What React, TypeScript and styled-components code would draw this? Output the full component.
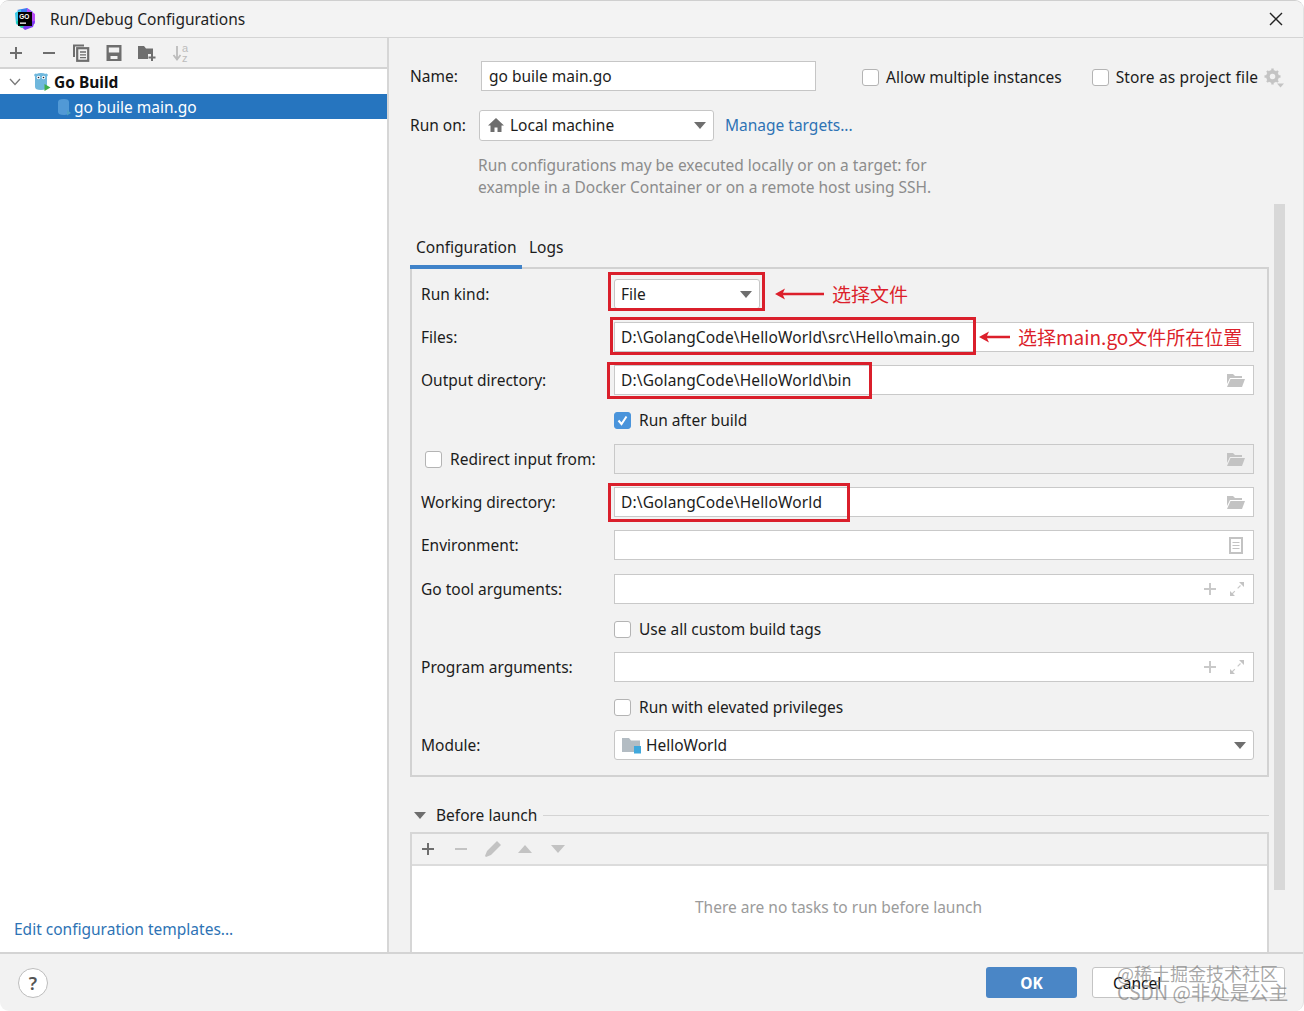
import styled, { createGlobalStyle } from "styled-components";

const GlobalStyle = createGlobalStyle`
  html, body { margin: 0; padding: 0; background: #fff; }
  body { font-family: "Noto Sans", "Noto Sans CJK SC", sans-serif; font-size: 15.5px; color: #1c1c1c; }
`;

const Window = styled.div`
  position: relative;
  width: 1304px;
  height: 1011px;
  box-sizing: border-box;
  border-top: 1px solid #cfcfcf;
  border-right: 1px solid #e2e2e2;
  border-radius: 9px;
  background: #f2f2f2;
  display: flex;
  flex-direction: column;
  overflow: hidden;
`;

const TitleBar = styled.div`
  height: 36px;
  flex: none;
  display: flex;
  align-items: center;
  padding: 0 20px 0 13px;
  background: #f3f3f3;
  border-bottom: 1px solid #d4d4d4;
`;

const TitleText = styled.div`
  margin-left: 13px;
  flex: 1;
  color: #1f1f1f;
`;

const Main = styled.div`
  flex: 1;
  min-height: 0;
  display: flex;
`;

const LeftPane = styled.div`
  width: 387px;
  flex: none;
  display: flex;
  flex-direction: column;
  background: #fff;
  border-right: 2px solid #d6d6d6;
`;

const Toolbar = styled.div`
  height: 29px;
  flex: none;
  background: #f2f2f2;
  border-bottom: 2px solid #d4d4d4;
  display: flex;
  align-items: center;
  padding-left: 7px;
  gap: 14.5px;
`;

const TreeRow = styled.div<{ $selected?: boolean; $indent: number }>`
  height: 25px;
  display: flex;
  align-items: center;
  padding-left: ${(p) => p.$indent}px;
  background: ${(p) => (p.$selected ? "#2675bf" : "transparent")};
  color: ${(p) => (p.$selected ? "#fff" : "#111")};
`;

const TreeChevron = styled.span`
  display: flex;
  width: 24px;
`;

const TreeLabel = styled.span<{ $bold?: boolean }>`
  font-weight: ${(p) => (p.$bold ? 700 : 400)};
  margin-left: 3px;
`;

const LeftSpacer = styled.div`
  flex: 1;
`;

const LinkText = styled.a`
  color: #2e73b5;
  text-decoration: none;
`;

const TemplatesLink = styled(LinkText)`
  padding: 0 0 12px 14px;
`;

const ManageLink = styled(LinkText)`
  margin-left: 11px;
`;

const RightPane = styled.div`
  position: relative;
  flex: 1;
  min-width: 0;
  overflow: hidden;
  padding: 23px 0 0 21px;
`;

const TopRow = styled.div<{ $gap?: number }>`
  display: flex;
  align-items: center;
  height: 30px;
  margin-top: ${(p) => p.$gap ?? 0}px;
`;

const TopLabel = styled.div<{ $width: number }>`
  width: ${(p) => p.$width}px;
  flex: none;
`;

const NameInput = styled.div`
  width: 335px;
  height: 30px;
  box-sizing: border-box;
  border: 1px solid #c6c6c6;
  background: #fff;
  padding-left: 7px;
  display: flex;
  align-items: center;
`;

const CheckLabel = styled.label<{ $left?: number; $spacing?: number }>`
  display: flex;
  align-items: center;
  gap: 7px;
  margin-left: ${(p) => p.$left ?? 0}px;
  letter-spacing: ${(p) => p.$spacing ?? 0}px;
`;

const TopCheck = styled(CheckLabel)`
  position: relative;
  top: 1px;
`;

const FormCheck = styled(CheckLabel)`
  gap: 8px;
`;

const CheckBox = styled.span<{ $checked?: boolean }>`
  width: 17px;
  height: 17px;
  box-sizing: border-box;
  border-radius: 3px;
  background: ${(p) => (p.$checked ? "#4a94db" : "#fff")};
  border: 1px solid ${(p) => (p.$checked ? "#4a94db" : "#b4b4b4")};
  display: flex;
  align-items: center;
  justify-content: center;
`;

const GearSlot = styled.span`
  display: flex;
  margin-left: 6px;
  margin-top: 3px;
`;

const Combo = styled.div<{ $width?: number; $height?: number; $pad?: number; $gap?: number }>`
  width: ${(p) => (p.$width ? `${p.$width}px` : "100%")};
  height: ${(p) => p.$height ?? 30}px;
  box-sizing: border-box;
  background: #fff;
  border: 1px solid #c6c6c6;
  border-radius: 3px;
  display: flex;
  align-items: center;
  padding: 0 7px 0 ${(p) => p.$pad ?? 8}px;
  gap: ${(p) => p.$gap ?? 6}px;
`;

const ComboText = styled.span`
  flex: 1;
`;

const HelpText = styled.div`
  margin: 14px 0 0 68px;
  color: #8c8c8c;
  line-height: 22px;
`;

const Tabs = styled.div`
  margin-top: 36px;
  display: flex;
  height: 35px;
  width: 858px;
`;

const Tab = styled.div<{ $active?: boolean }>`
  padding: 0 ${(p) => (p.$active ? "6px" : "7px")};
  height: 35px;
  line-height: 27px;
  box-sizing: border-box;
  width: ${(p) => (p.$active ? "112px" : "auto")};
  color: #1c1c1c;
  position: relative;
  z-index: 1;
  border-bottom: 4px solid ${(p) => (p.$active ? "#4083c9" : "transparent")};
`;

const ConfigPanel = styled.div`
  width: 859px;
  box-sizing: border-box;
  margin-top: -2px;
  border: 2px solid #d2d2d2;
  padding: 10px 13px 15px 9px;
`;

const FormRow = styled.div<{ $gap?: number; $height?: number }>`
  position: relative;
  display: grid;
  grid-template-columns: 193px 1fr;
  align-items: center;
  height: ${(p) => p.$height ?? 30}px;
  margin-top: ${(p) => p.$gap ?? 0}px;
`;

const RowLabel = styled.div`
  color: #1c1c1c;
`;

const RedirectLabel = styled(FormCheck)`
  margin-left: 4px;
  white-space: nowrap;
`;

const Field = styled.div<{ $disabled?: boolean }>`
  height: 30px;
  box-sizing: border-box;
  background: ${(p) => (p.$disabled ? "#f0f0f0" : "#fff")};
  border: 1px solid #c9c9c9;
  display: flex;
  align-items: center;
  padding: 0 8px 0 6px;
  gap: 10px;
`;

const FieldText = styled.span`
  flex: 1;
  white-space: nowrap;
  letter-spacing: 0.13px;
`;

const RedBox = styled.div<{ $left: number; $top: number; $width: number; $height: number }>`
  position: absolute;
  left: ${(p) => p.$left}px;
  top: ${(p) => p.$top}px;
  width: ${(p) => p.$width}px;
  height: ${(p) => p.$height}px;
  box-sizing: border-box;
  border: 3px solid #da1f2b;
  pointer-events: none;
`;

const Note = styled.div<{ $left: number; $top: number }>`
  position: absolute;
  left: ${(p) => p.$left}px;
  top: ${(p) => p.$top}px;
  display: flex;
  align-items: center;
  gap: 8px;
  color: #dc1f2b;
  font-family: "Noto Sans CJK SC", sans-serif;
  font-size: 19px;
  line-height: 26px;
  white-space: nowrap;
`;

const BeforeHeader = styled.div`
  margin-top: 27px;
  width: 859px;
  height: 22px;
  display: flex;
  align-items: center;
`;

const BeforeArrow = styled.span`
  display: flex;
  margin-left: 4px;
`;

const BeforeTitle = styled.span`
  margin: 0 6px 0 10px;
`;

const HeaderLine = styled.div`
  flex: 1;
  height: 1px;
  background: #d4d4d4;
`;

const TaskBox = styled.div`
  margin-top: 6px;
  width: 859px;
  height: 140px;
  box-sizing: border-box;
  border: 2px solid #d6d6d6;
  border-bottom: 0;
`;

const TaskToolbar = styled.div`
  height: 30px;
  display: flex;
  align-items: center;
  gap: 14.5px;
  padding-left: 7px;
  border-bottom: 2px solid #dcdcdc;
`;

const TaskBody = styled.div`
  background: #fff;
  height: 110px;
  display: flex;
  justify-content: center;
  padding-top: 30px;
  box-sizing: border-box;
  color: #9b9b9b;
  padding-right: 2px;
`;

const ScrollThumb = styled.div`
  position: absolute;
  left: 885px;
  top: 166px;
  width: 11px;
  height: 686px;
  background: #d8d8d8;
`;

const Footer = styled.div`
  position: relative;
  flex: none;
  height: 59px;
  box-sizing: border-box;
  border-top: 2px solid #d4d4d4;
  display: flex;
  align-items: center;
  padding: 0 18px 0 18px;
`;

const HelpButton = styled.div`
  width: 30px;
  height: 30px;
  box-sizing: border-box;
  border-radius: 50%;
  background: #fff;
  border: 1px solid #bdbdbd;
  color: #555;
  font-size: 18px;
  font-weight: 600;
  display: flex;
  align-items: center;
  justify-content: center;
`;

const OkButton = styled.div`
  margin-left: auto;
  width: 91px;
  height: 31px;
  box-sizing: border-box;
  border-radius: 3px;
  background: #4a86c6;
  color: #fff;
  font-weight: 700;
  display: flex;
  align-items: center;
  justify-content: center;
`;

const CancelButton = styled.div`
  margin-left: 15px;
  width: 193px;
  height: 31px;
  box-sizing: border-box;
  border-radius: 3px;
  background: #fff;
  border: 1px solid #c4c4c4;
  color: #111;
  padding-left: 20px;
  display: flex;
  align-items: center;
`;

const Watermark = styled.div`
  position: absolute;
  left: 1117px;
  top: 11px;
  color: rgba(110, 110, 110, 0.6);
  font-family: "Noto Sans CJK SC", sans-serif;
  pointer-events: none;
`;

const WatermarkTop = styled.div`
  font-size: 18px;
  line-height: 17px;
  white-space: nowrap;
`;

const WatermarkBottom = styled.div`
  font-size: 19.5px;
  line-height: 19px;
  white-space: nowrap;
`;

const GoLandLogo = () => (
  <svg width="24" height="24" viewBox="0 0 24 24">
    <path d="M4 3 L14 1 L20 5 L14 9 Z" fill="#3a7bf0" />
    <path d="M2 6 L8 2 L8 20 L3 17 Z" fill="#3bc9e8" />
    <path d="M14 1 L22 7 L22 17 L14 12 Z" fill="#b74af7" />
    <path d="M4 16 L12 23 L20 20 L22 14 Z" fill="#7a3cf0" />
    <path d="M3 15 L8 21 L11 20 L6 13 Z" fill="#18d6a0" />
    <rect x="5" y="5" width="14" height="14" fill="#000" />
    <text x="6.3" y="12" fontSize="6.5" fontWeight="700" fill="#fff" fontFamily="Liberation Sans, sans-serif">GO</text>
    <rect x="7" y="15.5" width="6" height="1.3" fill="#fff" />
  </svg>
);

const CloseIcon = () => (
  <svg width="14" height="14" viewBox="0 0 14 14">
    <path d="M1 1 L13 13 M13 1 L1 13" stroke="#222" strokeWidth="1.4" />
  </svg>
);

const PlusIcon = ({ color = "#6e6e6e" }: { color?: string }) => (
  <svg width="18" height="18" viewBox="0 0 18 18">
    <path d="M9 3 V15 M3 9 H15" stroke={color} strokeWidth="2" />
  </svg>
);

const MinusIcon = ({ color = "#6e6e6e" }: { color?: string }) => (
  <svg width="18" height="18" viewBox="0 0 18 18">
    <path d="M3 9 H15" stroke={color} strokeWidth="2" />
  </svg>
);

const CopyIcon = () => (
  <svg width="18" height="18" viewBox="0 0 18 18" fill="none">
    <path d="M2 13 V1.5 H12" stroke="#6e6e6e" strokeWidth="2" />
    <rect x="5.2" y="4.2" width="11" height="12.6" stroke="#6e6e6e" strokeWidth="2.2" />
    <path d="M8 8 H14 M8 10.8 H14 M8 13.6 H14" stroke="#6e6e6e" strokeWidth="1.3" />
  </svg>
);

const SaveIcon = () => (
  <svg width="18" height="18" viewBox="0 0 18 18">
    <path fillRule="evenodd" fill="#6e6e6e" d="M1.5 1 H16.5 V17 H1.5 Z M3.8 3.5 V8.5 H14.2 V3.5 Z M5.5 12 V15 H12.5 V12 Z" />
  </svg>
);

const FolderPlusIcon = () => (
  <svg width="20" height="18" viewBox="0 0 20 18">
    <path fill="#6e6e6e" d="M1 2 H7 L9 4.5 H16 V10 H11 V15 H1 Z" />
    <path d="M15 10 V17 M11.5 13.5 H18.5" stroke="#6e6e6e" strokeWidth="2" />
  </svg>
);

const SortIcon = () => (
  <svg width="18" height="20" viewBox="0 0 18 20">
    <path d="M5 3 V16 M1.5 12 L5 16.5 L8.5 12" stroke="#bcbcbc" strokeWidth="1.8" fill="none" />
    <text x="10" y="9" fontSize="11" fill="#bcbcbc" fontFamily="Liberation Sans, sans-serif">a</text>
    <text x="10" y="18.5" fontSize="11" fill="#bcbcbc" fontFamily="Liberation Sans, sans-serif">z</text>
  </svg>
);

const ChevronIcon = () => (
  <svg width="12" height="8" viewBox="0 0 12 8" fill="none">
    <path d="M1 1 L6 6.5 L11 1" stroke="#7a7a7a" strokeWidth="1.3" />
  </svg>
);

const GopherIcon = () => (
  <svg width="18" height="20" viewBox="0 0 18 20">
    <circle cx="2.8" cy="3" r="1.6" fill="#6fb7dc" />
    <circle cx="13.2" cy="3" r="1.6" fill="#6fb7dc" />
    <path d="M2 5 Q2 1 8 1 Q14 1 14 5 V15 Q14 18 8 18 Q2 18 2 15 Z" fill="#6fb7dc" />
    <circle cx="5.5" cy="5.5" r="1.8" fill="#fff" />
    <circle cx="10.5" cy="5.5" r="1.8" fill="#fff" />
    <circle cx="5.5" cy="5.5" r="0.8" fill="#223" />
    <circle cx="10.5" cy="5.5" r="0.8" fill="#223" />
    <path d="M11.5 12 L17.5 15.5 L11.5 19 Z" fill="#3fae4a" />
  </svg>
);

const FadedGopherIcon = () => (
  <svg width="14" height="18" viewBox="0 0 14 18">
    <path d="M1 4 Q1 1 7 1 Q12 1 12 4 V14 Q12 17 7 17 Q1 17 1 14 Z" fill="#5199d6" />
    <path d="M10 12 L14 15 L10 17.5 Z" fill="#4d9fc4" />
  </svg>
);

const DropArrow = ({ color = "#6e6e6e" }: { color?: string }) => (
  <svg width="12" height="7" viewBox="0 0 12 7">
    <path d="M0 0 H12 L6 7 Z" fill={color} />
  </svg>
);

const CheckMark = () => (
  <svg width="13" height="13" viewBox="0 0 13 13" fill="none">
    <path d="M2.5 6.5 L5.5 10 L10.5 2.5" stroke="#fff" strokeWidth="2" />
  </svg>
);

const GearIcon = () => (
  <svg width="20" height="20" viewBox="0 0 20 20">
    <circle cx="8.5" cy="8.5" r="4.6" fill="none" stroke="#c4c4c4" strokeWidth="3.6" />
    <path d="M8.5 0.5 V3 M8.5 14 V16.5 M0.5 8.5 H3 M14 8.5 H16.5 M3 3 L5 5 M12 12 L14 14 M14 3 L12 5 M5 12 L3 14" stroke="#c4c4c4" strokeWidth="2.4" />
    <path d="M13 15.5 H20 L16.5 19.5 Z" fill="#c4c4c4" />
  </svg>
);

const HomeIcon = () => (
  <svg width="16" height="16" viewBox="0 0 16 16">
    <path fill="#6e6e6e" d="M8 1 L16 8.5 H13.5 V15 H9.5 V10.5 H6.5 V15 H2.5 V8.5 H0 Z" />
  </svg>
);

const FolderOpenIcon = () => (
  <svg width="19" height="15" viewBox="0 0 19 15">
    <path fill="#c3c3c3" d="M1 1 H7 L9 3 H16 V5 H4 L1 11 Z" />
    <path fill="#c3c3c3" d="M4.5 6 H19 L16 14 H1 Z" />
  </svg>
);

const DocIcon = () => (
  <svg width="18" height="17" viewBox="-2 0 18 17" fill="none">
    <rect x="1" y="1" width="12" height="15" stroke="#c3c3c3" strokeWidth="2" />
    <path d="M3.5 5.5 H10.5 M3.5 8.5 H10.5 M3.5 11.5 H10.5" stroke="#c3c3c3" strokeWidth="1.2" />
  </svg>
);

const ExpandIcon = () => (
  <svg width="16" height="16" viewBox="0 0 16 16">
    <path d="M3 13 L13 3" stroke="#c9c9c9" strokeWidth="1.2" strokeDasharray="4 4" />
    <path d="M10 1 H15 V6 Z M1 10 V15 H6 Z" fill="#c3c3c3" />
  </svg>
);

const ModuleIcon = () => (
  <svg width="19" height="17" viewBox="0 0 19 17">
    <path fill="#b3bcc3" d="M0 1 H7 L9 3.5 H18 V15 H0 Z" />
    <rect x="12" y="9" width="7" height="7.5" fill="#40a8dc" />
  </svg>
);

const PencilIcon = () => (
  <svg width="18" height="18" viewBox="0 0 18 18">
    <path fill="#c3c3c3" d="M13 1 L17 5 L7 15 L2 17 L1 16 L3 11 Z" />
  </svg>
);

const UpArrow = () => (
  <svg width="16" height="9" viewBox="0 0 16 9">
    <path d="M8 0 L15 8 H1 Z" fill="#c3c3c3" />
  </svg>
);

const DownArrow = () => (
  <svg width="19" height="9" viewBox="-3 0 19 9">
    <path d="M1 0 H15 L8 8 Z" fill="#c3c3c3" />
  </svg>
);

const RedArrow = ({ width }: { width: number }) => (
  <svg width={width} height="12" viewBox={`0 0 ${width} 12`}>
    <path d={`M0 6 L10 0.5 L8 4.8 H${width} V7.2 H8 L10 11.5 Z`} fill="#dc1f2b" />
  </svg>
);

export default function App() {
  return (
    <>
      <GlobalStyle />
      <Window>
        <TitleBar>
          <GoLandLogo />
          <TitleText>Run/Debug Configurations</TitleText>
          <CloseIcon />
        </TitleBar>
        <Main>
          <LeftPane>
            <Toolbar>
              <PlusIcon />
              <MinusIcon />
              <CopyIcon />
              <SaveIcon />
              <FolderPlusIcon />
              <SortIcon />
            </Toolbar>
            <TreeRow $indent={9}>
              <TreeChevron>
                <ChevronIcon />
              </TreeChevron>
              <GopherIcon />
              <TreeLabel $bold>Go Build</TreeLabel>
            </TreeRow>
            <TreeRow $indent={57} $selected>
              <FadedGopherIcon />
              <TreeLabel>go buile main.go</TreeLabel>
            </TreeRow>
            <LeftSpacer />
            <TemplatesLink>Edit configuration templates...</TemplatesLink>
          </LeftPane>
          <RightPane>
            <TopRow>
              <TopLabel $width={71}>Name:</TopLabel>
              <NameInput>go buile main.go</NameInput>
              <TopCheck $left={46}>
                <CheckBox />
                Allow multiple instances
              </TopCheck>
              <TopCheck $left={30} $spacing={0.15}>
                <CheckBox />
                Store as project file
              </TopCheck>
              <GearSlot>
                <GearIcon />
              </GearSlot>
            </TopRow>
            <TopRow $gap={19}>
              <TopLabel $width={69}>Run on:</TopLabel>
              <Combo $width={235} $height={31}>
                <HomeIcon />
                <ComboText>Local machine</ComboText>
                <DropArrow />
              </Combo>
              <ManageLink>Manage targets...</ManageLink>
            </TopRow>
            <HelpText>
              Run configurations may be executed locally or on a target: for
              <br />
              example in a Docker Container or on a remote host using SSH.
            </HelpText>
            <Tabs>
              <Tab $active>Configuration</Tab>
              <Tab>Logs</Tab>
            </Tabs>
            <ConfigPanel>
              <FormRow>
                <RowLabel>Run kind:</RowLabel>
                <Combo $width={146} $pad={6}>
                  <ComboText>File</ComboText>
                  <DropArrow />
                </Combo>
                <RedBox $left={187} $top={-7} $width={157} $height={39} />
                <Note $left={354} $top={2}>
                  <RedArrow width={49} />
                  选择文件
                </Note>
              </FormRow>
              <FormRow $gap={13}>
                <RowLabel>Files:</RowLabel>
                <Field>
                  <FieldText>D:\GolangCode\HelloWorld\src\Hello\main.go</FieldText>
                </Field>
                <RedBox $left={189} $top={-5} $width={366} $height={38} />
                <Note $left={558} $top={2}>
                  <RedArrow width={31} />
                  选择main.go文件所在位置
                </Note>
              </FormRow>
              <FormRow $gap={13}>
                <RowLabel>Output directory:</RowLabel>
                <Field>
                  <FieldText>D:\GolangCode\HelloWorld\bin</FieldText>
                  <FolderOpenIcon />
                </Field>
                <RedBox $left={186} $top={-3} $width={265} $height={37} />
              </FormRow>
              <FormRow $gap={12} $height={26}>
                <span />
                <FormCheck>
                  <CheckBox $checked>
                    <CheckMark />
                  </CheckBox>
                  Run after build
                </FormCheck>
              </FormRow>
              <FormRow $gap={11}>
                <RedirectLabel>
                  <CheckBox />
                  Redirect input from:
                </RedirectLabel>
                <Field $disabled>
                  <FieldText />
                  <FolderOpenIcon />
                </Field>
              </FormRow>
              <FormRow $gap={13}>
                <RowLabel>Working directory:</RowLabel>
                <Field>
                  <FieldText>D:\GolangCode\HelloWorld</FieldText>
                  <FolderOpenIcon />
                </Field>
                <RedBox $left={187} $top={-4} $width={242} $height={39} />
              </FormRow>
              <FormRow $gap={13}>
                <RowLabel>Environment:</RowLabel>
                <Field>
                  <FieldText />
                  <DocIcon />
                </Field>
              </FormRow>
              <FormRow $gap={14}>
                <RowLabel>Go tool arguments:</RowLabel>
                <Field>
                  <FieldText />
                  <PlusIcon color="#c9c9c9" />
                  <ExpandIcon />
                </Field>
              </FormRow>
              <FormRow $gap={12} $height={26}>
                <span />
                <FormCheck>
                  <CheckBox />
                  Use all custom build tags
                </FormCheck>
              </FormRow>
              <FormRow $gap={10}>
                <RowLabel>Program arguments:</RowLabel>
                <Field>
                  <FieldText />
                  <PlusIcon color="#c9c9c9" />
                  <ExpandIcon />
                </Field>
              </FormRow>
              <FormRow $gap={12} $height={26}>
                <span />
                <FormCheck>
                  <CheckBox />
                  Run with elevated privileges
                </FormCheck>
              </FormRow>
              <FormRow $gap={10}>
                <RowLabel>Module:</RowLabel>
                <Combo $pad={7} $gap={5}>
                  <ModuleIcon />
                  <ComboText>HelloWorld</ComboText>
                  <DropArrow />
                </Combo>
              </FormRow>
            </ConfigPanel>
            <BeforeHeader>
              <BeforeArrow>
                <DropArrow />
              </BeforeArrow>
              <BeforeTitle>Before launch</BeforeTitle>
              <HeaderLine />
            </BeforeHeader>
            <TaskBox>
              <TaskToolbar>
                <PlusIcon />
                <MinusIcon color="#c3c3c3" />
                <PencilIcon />
                <UpArrow />
                <DownArrow />
              </TaskToolbar>
              <TaskBody>There are no tasks to run before launch</TaskBody>
            </TaskBox>
            <ScrollThumb />
          </RightPane>
        </Main>
        <Footer>
          <HelpButton>?</HelpButton>
          <OkButton>OK</OkButton>
          <CancelButton>Cancel</CancelButton>
          <Watermark>
            <WatermarkTop>@稀土掘金技术社区</WatermarkTop>
            <WatermarkBottom>CSDN @非处是公主</WatermarkBottom>
          </Watermark>
        </Footer>
      </Window>
    </>
  );
}
